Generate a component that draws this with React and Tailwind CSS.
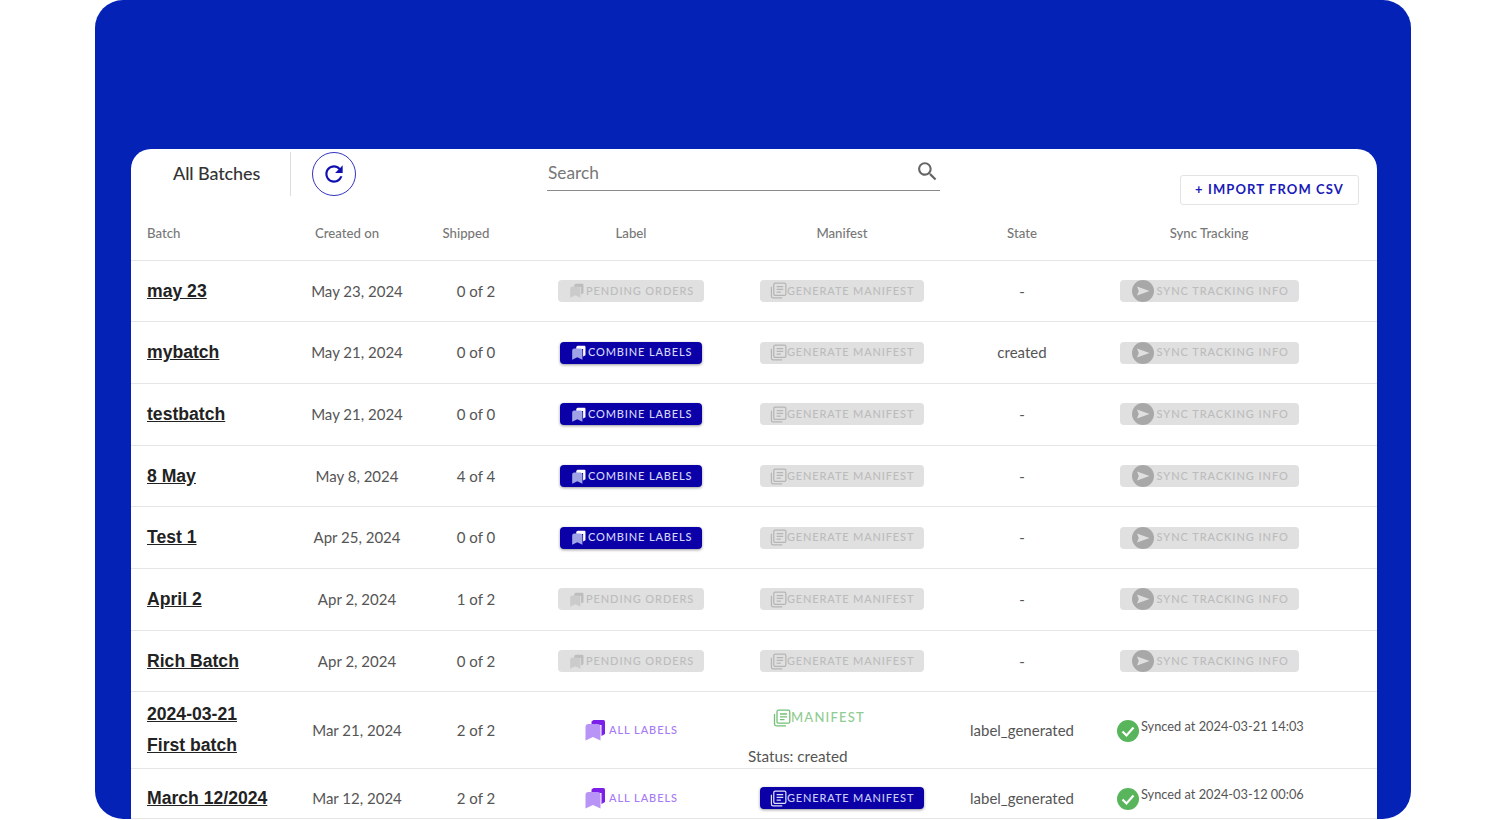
import React from 'react';

const rows = [
  { name: 'may 23', date: 'May 23, 2024', shipped: '0 of 2', label: 'pending', manifest: 'off', state: '-', sync: 'off' },
  { name: 'mybatch', date: 'May 21, 2024', shipped: '0 of 0', label: 'combine', manifest: 'off', state: 'created', sync: 'off' },
  { name: 'testbatch', date: 'May 21, 2024', shipped: '0 of 0', label: 'combine', manifest: 'off', state: '-', sync: 'off' },
  { name: '8 May', date: 'May 8, 2024', shipped: '4 of 4', label: 'combine', manifest: 'off', state: '-', sync: 'off' },
  { name: 'Test 1', date: 'Apr 25, 2024', shipped: '0 of 0', label: 'combine', manifest: 'off', state: '-', sync: 'off' },
  { name: 'April 2', date: 'Apr 2, 2024', shipped: '1 of 2', label: 'pending', manifest: 'off', state: '-', sync: 'off' },
  { name: 'Rich Batch', date: 'Apr 2, 2024', shipped: '0 of 2', label: 'pending', manifest: 'off', state: '-', sync: 'off' },
  { name: '2024-03-21 First batch', date: 'Mar 21, 2024', shipped: '2 of 2', label: 'all', manifest: 'link', state: 'label_generated', sync: 'Synced at 2024-03-21 14:03', tall: true },
  { name: 'March 12/2024', date: 'Mar 12, 2024', shipped: '2 of 2', label: 'all', manifest: 'on', state: 'label_generated', sync: 'Synced at 2024-03-12 00:06', last: true },
];

const columns = 'grid grid-cols-[166px_120px_118px_192px_230px_130px_244px_1fr]';

function LabelIcon({ className, back, front }) {
  return (
    <svg viewBox="0 0 22 22" className={className}>
      <path d="M7 2.5 L9 1 H19 Q20.5 1 20.5 3 V15 L17 17 V6 H7 Z" fill={back} />
      <path d="M1 8 Q1 5 4 5 H13 Q16 5 16 8 V21.5 L8.5 18 L1 21.5 Z" fill={front} />
    </svg>
  );
}

function ManifestIcon({ className }) {
  return (
    <svg viewBox="0 0 18 18" fill="none" stroke="currentColor" strokeWidth="1.3" className={className}>
      <path d="M1.5 5 V15 Q1.5 16.8 3.3 16.8 H13" />
      <rect x="4" y="1.2" width="12.8" height="13" rx="1.5" />
      <path d="M7 5 H14 M7 7.8 H14 M7 10.6 H11.5" />
    </svg>
  );
}

function SyncIcon() {
  return (
    <svg viewBox="0 0 22 22" className="h-[22px] w-[22px] shrink-0">
      <circle cx="11" cy="11" r="11" fill="#a8a8a8" />
      <path d="M5 6.5 L17.5 11 L5 15.5 L6.8 11 Z" fill="#e0e0e0" />
    </svg>
  );
}

function LabelCell({ kind }) {
  if (kind === 'pending') {
    return (
      <div className="flex h-[22px] w-[146px] items-center rounded-[4px] bg-[#e0e0e0] pl-[11px] text-[11px] font-medium tracking-[0.9px] text-[#bcbcbc]">
        <LabelIcon className="h-[15px] w-[16px] shrink-0" back="#bdbdbd" front="#cbcbcb" />
        <span className="ml-[1px] whitespace-nowrap">PENDING ORDERS</span>
      </div>
    );
  }
  if (kind === 'combine') {
    return (
      <div className="flex h-[22px] w-[142px] items-center rounded-[4px] bg-[#0b00a8] pl-[11px] text-[11px] font-medium tracking-[0.85px] text-[#d5d8f5] shadow-[0_1px_3px_rgba(0,0,0,0.4)]">
        <LabelIcon className="h-[15px] w-[16px] shrink-0" back="#ffffff" front="#9fa3e6" />
        <span className="ml-[1px] whitespace-nowrap">COMBINE LABELS</span>
      </div>
    );
  }
  return (
    <div className="flex items-center text-[11px] font-medium tracking-[0.95px] text-[#a679f5]">
      <LabelIcon className="h-[22px] w-[23px] shrink-0" back="#7c1fe8" front="#b794f6" />
      <span className="ml-[2px] whitespace-nowrap">ALL LABELS</span>
    </div>
  );
}

function ManifestCell({ kind }) {
  if (kind === 'off') {
    return (
      <div className="flex h-[22px] w-[164px] items-center rounded-[4px] bg-[#e0e0e0] pl-[10px] text-[11px] font-medium tracking-[0.85px] text-[#bcbcbc]">
        <ManifestIcon className="h-[17px] w-[17px] shrink-0 text-[#b5b5b5]" />
        <span className="whitespace-nowrap">GENERATE MANIFEST</span>
      </div>
    );
  }
  if (kind === 'on') {
    return (
      <div className="flex h-[22px] w-[164px] items-center rounded-[4px] bg-[#0b00a8] pl-[10px] text-[11px] font-medium tracking-[0.85px] text-[#c9cdf3] shadow-[0_1px_3px_rgba(0,0,0,0.4)]">
        <ManifestIcon className="h-[17px] w-[17px] shrink-0 text-[#dfe1f8]" />
        <span className="whitespace-nowrap">GENERATE MANIFEST</span>
      </div>
    );
  }
  return (
    <div className="flex h-full w-[230px] flex-col pl-[21px] pt-[16px]">
      <div className="ml-[25px] flex items-center text-[13px] font-medium tracking-[1.2px] text-[#8fcc92]">
        <ManifestIcon className="h-[18px] w-[18px] shrink-0 text-[#72c076]" />
        <span>MANIFEST</span>
      </div>
      <div className="mt-[19px] text-[15.3px] leading-[18px] text-[#555555]">Status: created</div>
    </div>
  );
}

function SyncCell({ value }) {
  if (value === 'off') {
    return (
      <div className="flex h-[22px] w-[179px] items-center rounded-[4px] bg-[#e0e0e0] pl-[12px] text-[11px] font-medium tracking-[0.95px] text-[#bcbcbc]">
        <SyncIcon />
        <span className="ml-[3px] whitespace-nowrap">SYNC TRACKING INFO</span>
      </div>
    );
  }
  return (
    <div className="flex w-[184px] items-start">
      <svg viewBox="0 0 22 22" className="mt-[1px] h-[22px] w-[22px] shrink-0">
        <circle cx="11" cy="11" r="11" fill="#58b55c" />
        <path d="M5.5 11.5 L9.5 15.5 L16.5 7.5" fill="none" stroke="#ffffff" strokeWidth="2.2" />
      </svg>
      <span className="-mt-[2px] ml-[2px] whitespace-nowrap text-[12.8px] text-[#555555]">{value}</span>
    </div>
  );
}

function BatchRow({ row }) {
  const height = row.tall ? 'h-[76.3px]' : row.last ? 'h-[52px] border-b-2 pt-[10px]' : 'h-[61.7px]';
  return (
    <div className={`${columns} ${height} items-center border-t border-[#e6e6e6] text-[15px] text-[#555555]`}>
      <a className={`pl-4 font-['Liberation_Sans',sans-serif] text-[17.6px] font-bold text-[#222222] underline ${row.tall ? 'w-[140px] leading-[31px]' : 'whitespace-nowrap'}`}>
        {row.name}
      </a>
      <div className="text-center">{row.date}</div>
      <div className="text-center">{row.shipped}</div>
      <div className="flex justify-center"><LabelCell kind={row.label} /></div>
      <div className={`flex justify-center ${row.tall ? 'h-full self-stretch' : ''}`}><ManifestCell kind={row.manifest} /></div>
      <div className="text-center">{row.state}</div>
      <div className="flex justify-center"><SyncCell value={row.sync} /></div>
    </div>
  );
}

export default function App() {
  return (
    <div className="h-[820px] overflow-hidden bg-white font-['Lato',sans-serif]">
      <div className="ml-[95px] h-[819px] w-[1316px] overflow-hidden rounded-[28px] bg-[#0522b6] pl-[36px] pt-[149px]">
        <div className="w-[1246px] rounded-t-[20px] bg-white">
          <div className="flex h-[59px] items-start">
            <div className="mt-[3px] flex h-[44px] w-[160px] items-center border-r border-[#dddddd] pb-[1px] pl-[42px] text-[18px] font-medium tracking-[-0.1px] text-[#333333]">
              All Batches
            </div>
            <div className="ml-[21px] mt-[3px] flex h-[44px] w-[44px] items-center justify-center rounded-full border-[1.5px] border-[#3434c0]">
              <svg viewBox="0 0 24 24" className="h-[26px] w-[26px]" fill="#1010b0">
                <path d="M17.65 6.35C16.2 4.9 14.21 4 12 4c-4.42 0-7.99 3.58-7.99 8s3.57 8 7.99 8c3.73 0 6.84-2.55 7.73-6h-2.08c-.82 2.33-3.04 4-5.65 4-3.31 0-6-2.69-6-6s2.69-6 6-6c1.66 0 3.14.69 4.22 1.78L13 11h7V4l-2.35 2.35z" />
              </svg>
            </div>
            <div className="ml-[191px] mt-[7px] flex h-[35px] w-[393px] items-center justify-between border-b border-[#8a8a8a] pl-[1px] text-[17.3px] text-[#777777]">
              <span>Search</span>
              <svg viewBox="0 0 24 24" className="mb-[3px] h-[25px] w-[25px]" fill="#666666">
                <path d="M15.5 14h-.79l-.28-.27C15.41 12.59 16 11.11 16 9.5 16 5.91 13.09 3 9.5 3S3 5.91 3 9.5 5.91 16 9.5 16c1.61 0 3.09-.59 4.23-1.57l.27.28v.79l5 4.99L20.49 19l-4.99-5zm-6 0C7.01 14 5 11.99 5 9.5S7.01 5 9.5 5 14 7.01 14 9.5 11.99 14 9.5 14z" />
              </svg>
            </div>
            <div className="ml-[240px] mt-[26px] flex h-[30px] w-[179px] items-center justify-center rounded-[3px] border border-[#e3e3e3] text-[13px] font-bold tracking-[1.1px] text-[#1a1ab8]">
              + IMPORT FROM CSV
            </div>
          </div>
          <div className={`${columns} h-[51.6px] items-center text-[13.2px] font-medium text-[#777777]`}>
            <div className="pl-4">Batch</div>
            <div className="pr-5 text-center">Created on</div>
            <div className="pr-5 text-center">Shipped</div>
            <div className="text-center">Label</div>
            <div className="text-center">Manifest</div>
            <div className="text-center">State</div>
            <div className="text-center">Sync Tracking</div>
          </div>
          {rows.map(row => <BatchRow key={row.name} row={row} />)}
        </div>
      </div>
    </div>
  );
}
